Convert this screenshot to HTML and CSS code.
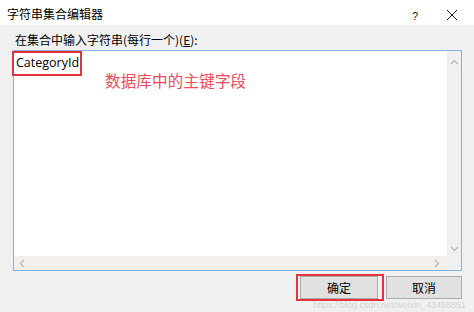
FILE: index.html
```html
<!DOCTYPE html>
<html>
<head>
<meta charset="utf-8">
<link rel="stylesheet" href="styles.css">
</head>
<body>
<div class="dialog">
  <div class="titlebar">
    <span class="title">字符串集合编辑器</span>
    <span class="tb-btn help">?</span>
    <span class="tb-btn close">
      <svg width="12" height="12" viewBox="0 0 12 12"><path d="M1 1L11 11M11 1L1 11" stroke="#222" stroke-width="1" fill="none"/></svg>
    </span>
  </div>
  <div class="content">
    <div class="label">在集合中输入字符串(每行一个)(<u>E</u>):</div>
    <div class="textbox">
      <div class="text-area">
        <div class="line">CategoryId</div>
        <div class="mark-box"></div>
        <div class="note">数据库中的主键字段</div>
      </div>
      <div class="vscroll">
        <svg width="9" height="6" viewBox="0 0 9 6"><path d="M1 5L4.5 1.5L8 5" stroke="#b5b5b5" stroke-width="1.2" fill="none"/></svg>
        <svg width="9" height="6" viewBox="0 0 9 6"><path d="M1 1L4.5 4.5L8 1" stroke="#b5b5b5" stroke-width="1.2" fill="none"/></svg>
      </div>
      <div class="hscroll">
        <svg width="6" height="9" viewBox="0 0 6 9"><path d="M5 1L1.5 4.5L5 8" stroke="#b5b5b5" stroke-width="1.2" fill="none"/></svg>
        <svg width="6" height="9" viewBox="0 0 6 9"><path d="M1 1L4.5 4.5L1 8" stroke="#b5b5b5" stroke-width="1.2" fill="none"/></svg>
      </div>
      <div class="corner"></div>
    </div>
    <div class="buttons">
      <div class="btn ok">确定<span class="btn-mark"></span></div>
      <div class="btn">取消</div>
      <span class="watermark">https://blog.csdn.net/weixin_43458851</span>
    </div>
  </div>
</div>
</body>
</html>
```

FILE: styles.css
```css
* { box-sizing: border-box; }
html, body { margin: 0; padding: 0; }
body {
  width: 474px;
  height: 312px;
  overflow: hidden;
  font-family: "Noto Sans CJK SC", "Noto Sans", sans-serif;
  font-size: 12px;
  color: #000;
  background: #f0f0f0;
}
.dialog {
  width: 474px;
  height: 312px;
  display: flex;
  flex-direction: column;
}
.titlebar {
  height: 25px;
  background: #fff;
  display: flex;
  align-items: center;
  padding-left: 7px;
  flex-shrink: 0;
}
.title {
  flex: 1;
  font-size: 12px;
  line-height: 14px;
  margin-top: 2px;
}
.tb-btn {
  display: flex;
  align-items: center;
  justify-content: center;
  color: #222;
}
.help {
  width: 12px;
  font-size: 11px;
  margin-right: 25px;
  margin-top: 6px;
  font-family: "Liberation Sans", sans-serif;
}
.close {
  width: 12px;
  margin-right: 16px;
  margin-top: 4px;
}
.content {
  flex: 1;
  padding: 0 12px 0 13px;
  display: flex;
  flex-direction: column;
}
.label {
  margin-top: 7px;
  height: 16px;
  line-height: 16px;
  padding-left: 2px;
  font-size: 12px;
}
.label u { text-decoration: underline; }
.textbox {
  margin-top: 2px;
  height: 221px;
  border: 1px solid #7fb2e5;
  background: #fff;
  display: grid;
  grid-template-columns: 1fr 14px;
  grid-template-rows: 1fr 14px;
}
.text-area {
  position: relative;
  padding: 3px 0 0 2px;
}
.line {
  font-family: "Open Sans", "Noto Sans", sans-serif;
  font-size: 12.5px;
  line-height: 18px;
}
.mark-box {
  position: absolute;
  left: -2px;
  top: 0px;
  width: 70px;
  height: 25px;
  border: 2px solid #e2333f;
}
.note {
  position: absolute;
  left: 91px;
  top: 19px;
  font-size: 15.5px;
  line-height: 20px;
  color: #ea4a5c;
  letter-spacing: 0.2px;
}
.vscroll {
  background: #f0f0f0;
  display: flex;
  flex-direction: column;
  justify-content: space-between;
  align-items: center;
  padding: 8px 0 4px 1px;
}
.hscroll {
  background: #f5f0ee;
  display: flex;
  justify-content: space-between;
  align-items: center;
  padding: 0 7px 0 5px;
}
.corner { background: #f0f0f0; }
.buttons {
  margin-top: 5px;
  display: flex;
  justify-content: flex-end;
  gap: 8px;
  position: relative;
}
.btn {
  position: relative;
  width: 76px;
  height: 23px;
  background: #e1e1e1;
  border: 1px solid #adadad;
  display: flex;
  align-items: center;
  justify-content: center;
  font-size: 12px;
}
.btn.ok { width: 78px; }
.btn-mark {
  position: absolute;
  left: -5px;
  right: -7px;
  top: -3px;
  bottom: -3px;
  border: 2px solid #e2333f;
}
.watermark {
  position: absolute;
  right: -4px;
  top: 24px;
  font-family: "Liberation Sans", sans-serif;
  font-size: 9px;
  line-height: 10px;
  color: rgba(190, 190, 190, 0.6);
  pointer-events: none;
}
```
